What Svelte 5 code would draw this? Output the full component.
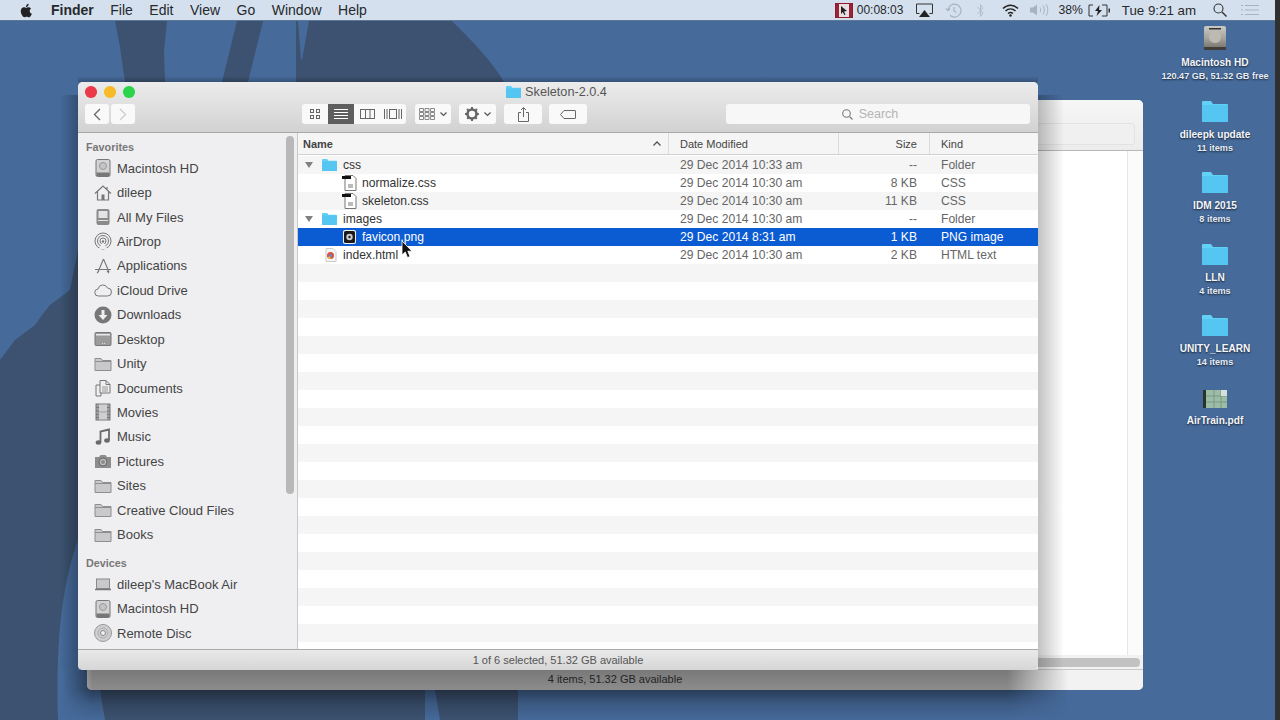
<script>
  const menus = ['File', 'Edit', 'View', 'Go', 'Window', 'Help'];

  const favorites = [
    ['hd', 'Macintosh HD'], ['home', 'dileep'], ['files', 'All My Files'], ['airdrop', 'AirDrop'],
    ['apps', 'Applications'], ['cloud', 'iCloud Drive'], ['downloads', 'Downloads'], ['desktop', 'Desktop'],
    ['folder', 'Unity'], ['docs', 'Documents'], ['movies', 'Movies'], ['music', 'Music'],
    ['camera', 'Pictures'], ['folder', 'Sites'], ['folder', 'Creative Cloud Files'], ['folder', 'Books']
  ];
  const devices = [['laptop', "dileep's MacBook Air"], ['hd', 'Macintosh HD'], ['disc', 'Remote Disc']];

  const files = [
    { name: 'css', type: 'folder', open: true, date: '29 Dec 2014 10:33 am', size: '--', kind: 'Folder' },
    { name: 'normalize.css', type: 'css', child: true, date: '29 Dec 2014 10:30 am', size: '8 KB', kind: 'CSS' },
    { name: 'skeleton.css', type: 'css', child: true, date: '29 Dec 2014 10:30 am', size: '11 KB', kind: 'CSS' },
    { name: 'images', type: 'folder', open: true, date: '29 Dec 2014 10:30 am', size: '--', kind: 'Folder' },
    { name: 'favicon.png', type: 'png', child: true, selected: true, date: '29 Dec 2014 8:31 am', size: '1 KB', kind: 'PNG image' },
    { name: 'index.html', type: 'html', date: '29 Dec 2014 10:30 am', size: '2 KB', kind: 'HTML text' }
  ];
  const emptyRows = Array(21).fill(0);

  const desktopItems = [
    { icon: 'hd', name: 'Macintosh HD', info: '120.47 GB, 51.32 GB free' },
    { icon: 'folder', name: 'dileepk update', info: '11 items' },
    { icon: 'folder', name: 'IDM 2015', info: '8 items' },
    { icon: 'folder', name: 'LLN', info: '4 items' },
    { icon: 'folder', name: 'UNITY_LEARN', info: '14 items' },
    { icon: 'pdf', name: 'AirTrain.pdf', info: '' }
  ];
</script>

{#snippet folderIcon(w, h)}
  <svg width={w} height={h} viewBox="0 0 26 21">
    <path d="M1 0h8l2 3h14a1 1 0 0 1 1 1v16a1 1 0 0 1-1 1H1a1 1 0 0 1-1-1V1a1 1 0 0 1 1-1z" fill="#63d0f6" />
    <rect x="0" y="4" width="26" height="17" rx="1" fill="#55c6f2" />
  </svg>
{/snippet}

{#snippet sideIcon(name)}
  <svg class="side-icon" width="18" height="18" viewBox="0 0 18 18" fill="none" stroke="#777" stroke-width="1">
    {#if name === 'hd'}
      <rect x="2" y="0.5" width="14" height="17" rx="1.5" fill="#d2d2d4" />
      <circle cx="9" cy="7" r="3.5" fill="#c4c4c6" stroke="#999" />
      <rect x="2.5" y="13.5" width="13" height="3.5" fill="#777" stroke="none" />
    {:else if name === 'home'}
      <path d="M1 9.5 9 2l8 7.5M3.5 7.5V16h11V7.5M13 3v2.5" stroke-width="1.2" />
      <rect x="7.5" y="10.5" width="3" height="5.5" fill="#777" stroke="none" />
    {:else if name === 'files'}
      <rect x="2.5" y="1" width="13" height="16" rx="2" fill="#8a8a8a" stroke="none" />
      <rect x="4.5" y="3" width="9" height="7" fill="#e4e4e6" stroke="none" />
      <path d="M4 12.5h10" stroke="#e4e4e6" />
    {:else if name === 'airdrop'}
      <circle cx="9" cy="9" r="8" />
      <circle cx="9" cy="9" r="5.5" />
      <circle cx="9" cy="9" r="3" />
      <path d="M5 17 9 9l4 8z" fill="#efeff1" stroke="none" />
      <circle cx="9" cy="9.5" r="1.2" fill="#777" stroke="none" />
    {:else if name === 'apps'}
      <path d="M9.5 2 4 15M9.5 2 15 15M1 12.5h16M3 16l2-2M15 16l-2-2" stroke-width="1.1" />
    {:else if name === 'cloud'}
      <path d="M4.5 15a3.5 3.5 0 0 1-.5-7 5 5 0 0 1 9.5-1 4 4 0 0 1 0 8z" />
    {:else if name === 'downloads'}
      <circle cx="9" cy="9" r="8.5" fill="#777" stroke="none" />
      <path d="M7.5 4h3v5h3L9 14 4.5 9h3z" fill="#efeff1" stroke="none" />
    {:else if name === 'desktop'}
      <rect x="1" y="2.5" width="16" height="13" rx="1" fill="#9b9b9b" />
      <rect x="2" y="4" width="14" height="1.5" fill="#e8e8e8" stroke="none" />
      <path d="M8 13.5h3" stroke="#ddd" stroke-dasharray="1 1" />
    {:else if name === 'folder'}
      <path d="M1 3.5h6l1.5 2H17v10H1z" fill="#c9c9cb" stroke="#8e8e8e" />
      <path d="M1 6.5h16" stroke="#8e8e8e" />
    {:else if name === 'docs'}
      <path d="M2 6h5v11H2z" fill="#efeff1" />
      <path d="M6 1.500h6l4 4V14H6z" fill="#efeff1" />
      <path d="M12 1.500v4h4" />
      <path d="M8 8h6M8 10h6M8 12h6" stroke="#999" />
    {:else if name === 'movies'}
      <rect x="2" y="1" width="14" height="16" fill="#a0a0a0" />
      <rect x="5" y="1.5" width="8" height="7" fill="#cfcfd1" stroke="none" />
      <rect x="5" y="9.5" width="8" height="7" fill="#cfcfd1" stroke="none" />
      <path d="M2 4.5h3M2 8h3M2 11.5h3M2 14.5h3M13 4.5h3M13 8h3M13 11.5h3M13 14.500h3" />
    {:else if name === 'music'}
      <path d="M6.5 14V3.500L15 1.500V12" stroke="#6a6a6a" stroke-width="1.8" />
      <ellipse cx="4.5" cy="14.5" rx="2.8" ry="2.2" fill="#6a6a6a" stroke="none" />
      <ellipse cx="13" cy="12.5" rx="2.8" ry="2.2" fill="#6a6a6a" stroke="none" />
    {:else if name === 'camera'}
      <path d="M1 5h4l1.500-2h5L13 5h4v11H1z" fill="#8c8c8c" stroke="none" />
      <circle cx="9" cy="10" r="4" fill="#bcbcbc" stroke="#666" />
      <circle cx="9" cy="10" r="2" fill="#8c8c8c" stroke="none" />
    {:else if name === 'laptop'}
      <rect x="2.5" y="4" width="13" height="9.5" fill="#c9c9cb" stroke="#8a8a8a" />
      <path d="M1 14.5h16" stroke="#777" stroke-width="1.5" />
    {:else if name === 'disc'}
      <circle cx="9" cy="9" r="8.5" fill="#cfcfd1" stroke="#999" />
      <circle cx="9" cy="9" r="5" stroke="#aaa" />
      <circle cx="9" cy="9" r="2.5" fill="#efeff1" stroke="#888" />
    {/if}
  </svg>
{/snippet}

{#snippet fileIcon(type)}
  {#if type === 'folder'}
    <span class="file-icon">{@render folderIcon(15, 12)}</span>
  {:else if type === 'css'}
    <svg class="file-icon" width="15" height="16" viewBox="0 0 15 16">
      <path d="M3 .5h8l3 3v12H3z" fill="#fff" stroke="#777" />
      <rect x="0" y="1" width="9" height="3" fill="#111" />
      <rect x="6" y="9" width="5" height="4" fill="#bbb" />
    </svg>
  {:else if type === 'png'}
    <svg class="file-icon" width="15" height="14" viewBox="0 0 15 14">
      <rect x="1" y="0" width="13" height="14" rx="2" fill="#f2f2f2" />
      <rect x="2" y="1" width="11" height="12" rx="1.5" fill="#1a1a1a" />
      <circle cx="7.5" cy="7" r="3.2" fill="#ccc" />
      <circle cx="7.5" cy="7" r="1.2" fill="#222" />
    </svg>
  {:else}
    <svg class="file-icon" width="13" height="14" viewBox="0 0 13 14">
      <path d="M2 .5h7l3 3v10H2z" fill="#f6f6f6" stroke="#ccc" />
      <circle cx="6.5" cy="7.5" r="3.5" fill="#d9523f" />
      <path d="M6.500 7.500 3.500 9.500a3.500 3.500 0 0 0 3 1.500z" fill="#e8c33c" />
      <circle cx="6.5" cy="7.5" r="1.5" fill="#5a8fd8" />
    </svg>
  {/if}
{/snippet}

<div class="screen">
  <div class="desktop">
    <svg class="wallpaper" width="1275" height="720" viewBox="0 0 1275 720">
      <g fill="#3c5270">
        <path d="M115 21h52l-3 30 1 31h-40l-5-35z" />
        <path d="M237 21h26l-15 61h-26z" />
        <path d="M309 21H452c20 20 40 40 52 61v40H296V21h2l3 39h1z" />
        <path d="M0 360l15-20 20-15 7-10 8-10 20-15 8-40h440v470H0z" />
      </g>
      <path d="M58 720c-2-70 2-130 20-180l12 5 10 145 5 30z" fill="#466a9a" />
      <path d="M425 690h10l5 30h-15z" fill="#466a9a" />
    </svg>

    <header class="menubar">
      <svg class="apple" width="13" height="15" viewBox="0 0 14 16">
        <path d="M11.500 8.500c0-1.800 1.400-2.600 1.500-2.700-.8-1.200-2.100-1.400-2.500-1.400-1.100-.1-2.100.6-2.700.6-.5 0-1.400-.6-2.300-.6C4.300 4.400 3.200 5.100 2.500 6.200 1.200 8.400 2.200 11.700 3.500 13.500c.6.900 1.400 1.900 2.300 1.900.9 0 1.300-.6 2.400-.6s1.400.6 2.400.6 1.600-.9 2.200-1.800c.7-1 1-2 1-2.100-.1 0-2.300-.9-2.300-3zM9.700 3.100c.5-.6.800-1.400.7-2.300-.7 0-1.600.5-2.100 1.100-.5.500-.9 1.400-.8 2.200.8.100 1.700-.4 2.200-1z" fill="#222" />
      </svg>
      <b class="app-name">Finder</b>
      {#each menus as m}<span class="menu">{m}</span>{/each}

      <div class="status">
        <svg class="rec" width="18" height="15" viewBox="0 0 18 15">
          <rect x="0.5" y="0.5" width="17" height="14" fill="#e8dfe4" stroke="#8e1c2e" />
          <path d="M1 1h3v13H1zM14 1h3v13h-3z" fill="#9c2236" />
          <path d="M6 3l6 5-3 .4 1.500 3-1.200.6L7.800 9 6 11z" fill="#222" />
        </svg>
        <span class="timer">00:08:03</span>
        <svg class="airplay" width="17" height="15" viewBox="0 0 17 15">
          <path d="M3.500 10.500H.5V1h16v9.500h-3" fill="none" stroke="#333" />
          <path d="M8.500 7 14 14H3z" fill="#222" />
        </svg>
        <svg class="timemachine" width="17" height="15" viewBox="0 0 17 15" fill="none" stroke="#a9b3c0" stroke-width="1.200">
          <path d="M3 7.500a6.500 6.500 0 1 1 2 4.800M1 5.500l2 2.200 2-2.200M9 4v4l2.500 1.500" />
        </svg>
        <svg class="bluetooth" width="7" height="15" viewBox="0 0 7 15" fill="none" stroke="#b3bdca">
          <path d="M.5 4 6 10 3.500 13.500v-12L6 5 .5 11" />
        </svg>
        <svg class="wifi" width="17" height="13" viewBox="0 0 17 13" fill="none" stroke="#222" stroke-width="1.500">
          <path d="M1 4.500c4.500-4.400 10.500-4.400 15 0M3.500 7c3-2.800 7-2.800 10 0M6 9.500c1.500-1.200 3.500-1.200 5 0" />
          <circle cx="8.500" cy="11.500" r="1.200" fill="#222" stroke="none" />
        </svg>
        <svg class="volume" width="20" height="14" viewBox="0 0 20 14" fill="none" stroke="#a9b3c0">
          <path d="M1 4.500h3L8 1.500v11l-4-3H1z" fill="#a9b3c0" stroke="none" />
          <path d="M11 4.500c1 1.500 1 3.500 0 5M14 2.500c1.800 2.800 1.800 6.200 0 9M17 1c2.300 3.700 2.300 8.300 0 12" />
        </svg>
        <span class="percent">38%</span>
        <svg class="battery" width="22" height="13" viewBox="0 0 22 13" fill="none" stroke="#333">
          <path d="M5 1H1v11h4M14 1h5v11h-5" />
          <path d="M11.500 1 7 7h3l-1.500 5L14 6h-3z" fill="#222" stroke="none" />
          <rect x="20.500" y="4.500" width="1.500" height="4" fill="#333" stroke="none" />
        </svg>
        <span class="clock">Tue 9:21 am</span>
        <svg class="spot" width="14" height="14" viewBox="0 0 14 14" fill="none" stroke="#333" stroke-width="1.100">
          <circle cx="5.500" cy="5.500" r="4.500" />
          <path d="m9 9 4.500 4.500" stroke-width="1.400" />
        </svg>
        <svg class="notif" width="18" height="12" viewBox="0 0 18 12" fill="none" stroke="#a9b3c0" stroke-width="1.200">
          <path d="M0 1.500h2M4 1.500h14M0 6h2M4 6h14M0 10.500h2M4 10.500h14" />
        </svg>
      </div>
    </header>

    <ul class="desktop-icons">
      {#each desktopItems as item}
        <li class="desktop-item">
          <div class="desktop-thumb">
            {#if item.icon === 'folder'}
              {@render folderIcon(26, 21)}
            {:else if item.icon === 'hd'}
              <svg width="24" height="24" viewBox="0 0 24 24">
                <defs>
                  <linearGradient id="hd" x1="0" y1="0" x2="0" y2="1">
                    <stop offset="0" stop-color="#c9c9c4" />
                    <stop offset=".5" stop-color="#a7a49c" />
                    <stop offset="1" stop-color="#6e6c66" />
                  </linearGradient>
                </defs>
                <rect x="1" y="0" width="22" height="24" rx="2" fill="url(#hd)" />
                <rect x="6" y="2" width="12" height="1.5" fill="#333" />
                <circle cx="12" cy="11" r="6" fill="#bdbab2" />
                <rect x="1" y="21" width="22" height="3" fill="#3f3e3b" />
              </svg>
            {:else}
              <svg width="24" height="18" viewBox="0 0 24 18">
                <rect width="24" height="18" fill="#9dbca6" />
                <rect width="3" height="18" fill="#28332c" />
                <path d="M3 6h21M3 12h21M11 0v18M18 0v18" stroke="#7b9886" />
                <rect x="18" y="0" width="6" height="6" fill="#d5e0da" />
              </svg>
            {/if}
          </div>
          <span class="desktop-name">{item.name}</span>
          {#if item.info}<span class="desktop-info">{item.info}</span>{/if}
        </li>
      {/each}
    </ul>

    <section class="window back">
      <div class="back-head"><div class="back-search"></div></div>
      <div class="back-body"><div class="back-gutter"></div></div>
      <div class="back-scroll"><div class="back-thumb"></div></div>
      <div class="back-status">4 items, 51.32 GB available</div>
    </section>

    <!-- drop shadow of the front window -->
    <div class="shade shade-bottom"></div>
    <div class="shade shade-right"></div>
    <div class="shade shade-left"></div>
    <div class="shade shade-top"></div>

    <section class="window front">
      <div class="chrome">
        <div class="titlebar">
          <div class="lights">
            <i class="light red"></i><i class="light yellow"></i><i class="light green"></i>
          </div>
          <div class="title">{@render folderIcon(15, 14)}<span>Skeleton-2.0.4</span></div>
        </div>
        <div class="toolbar">
          <div class="nav">
            <button class="tb-btn nav-btn" aria-label="Back">
              <svg width="8" height="13" viewBox="0 0 8 13" fill="none" stroke="#666" stroke-width="1.300"><path d="M7 1 1.500 6.500 7 12" /></svg>
            </button>
            <button class="tb-btn nav-btn" aria-label="Forward">
              <svg width="8" height="13" viewBox="0 0 8 13" fill="none" stroke="#ccc" stroke-width="1.300"><path d="M1 1l5.500 5.500L1 12" /></svg>
            </button>
          </div>
          <div class="views">
            <button class="view" aria-label="Icons">
              <svg width="10" height="10" viewBox="0 0 10 10" fill="none" stroke="#666"><rect x=".5" y=".5" width="3" height="3" /><rect x="6.5" y=".5" width="3" height="3" /><rect x=".5" y="6.5" width="3" height="3" /><rect x="6.5" y="6.5" width="3" height="3" /></svg>
            </button>
            <button class="view on" aria-label="List">
              <svg width="14" height="10" viewBox="0 0 14 10" stroke="#fff"><path d="M0 .5h14M0 3.500h14M0 6.500h14M0 9.500h14" /></svg>
            </button>
            <button class="view" aria-label="Columns">
              <svg width="15" height="10" viewBox="0 0 15 10" fill="none" stroke="#666"><rect x=".5" y=".5" width="14" height="9" /><path d="M5.500 0v10M10 0v10" /></svg>
            </button>
            <button class="view" aria-label="Cover Flow">
              <svg width="18" height="10" viewBox="0 0 18 10" fill="none" stroke="#666"><rect x="5.5" y=".5" width="7" height="9" /><path d="M.5 0v10M3 0v10M15 0v10M17.500 0v10" /></svg>
            </button>
          </div>
          <button class="tb-btn arrange" aria-label="Arrange">
            <svg width="16" height="12" viewBox="0 0 16 12" fill="none" stroke="#888"><path d="M.5.5h4v3h-4zM6 .5h4v3H6zM11.500.5h4v3h-4zM.5 4.500h4v3h-4zM6 4.500h4v3H6zM11.500 4.500h4v3h-4zM.5 8.500h4v3h-4zM6 8.500h4v3H6zM11.500 8.500h4v3h-4z" /></svg>
            <svg width="7" height="5" viewBox="0 0 7 5" fill="none" stroke="#555" stroke-width="1.200"><path d="m.5.500 3 3 3-3" /></svg>
          </button>
          <button class="tb-btn gear" aria-label="Action">
            <svg width="14" height="14" viewBox="0 0 14 14"><circle cx="7" cy="7" r="4.500" fill="none" stroke="#666" stroke-width="2.600" /><path d="M7 0v14M0 7h14M2 2l10 10M12 2 2 12" stroke="#666" stroke-width="2" stroke-dasharray="2.300 9.300" /></svg>
            <svg width="7" height="5" viewBox="0 0 7 5" fill="none" stroke="#555" stroke-width="1.200"><path d="m.5.500 3 3 3-3" /></svg>
          </button>
          <button class="tb-btn share" aria-label="Share">
            <svg width="11" height="15" viewBox="0 0 11 15" fill="none" stroke="#666"><path d="M3 5.500H.5v9h10v-9H8M5.500 10V.5M3 3l2.500-2.500L8 3" /></svg>
          </button>
          <button class="tb-btn tag" aria-label="Tag">
            <svg width="16" height="9" viewBox="0 0 16 9" fill="none" stroke="#666"><path d="M4 .5h11a.5.500 0 0 1 .5.500v7a.5.500 0 0 1-.5.500H4L.5 4.500z" /></svg>
          </button>
          <div class="search">
            <svg width="11" height="11" viewBox="0 0 11 11" fill="none" stroke="#777" stroke-width="1.100"><circle cx="4.500" cy="4.500" r="3.800" /><path d="m7.500 7.500 3 3" /></svg>
            <span>Search</span>
          </div>
        </div>
      </div>

      <div class="main">
        <aside class="sidebar">
          <h4 class="side-head first">Favorites</h4>
          {#each favorites as [icon, label]}
            <div class="side-row">{@render sideIcon(icon)}<span>{label}</span></div>
          {/each}
          <h4 class="side-head">Devices</h4>
          {#each devices as [icon, label]}
            <div class="side-row">{@render sideIcon(icon)}<span>{label}</span></div>
          {/each}
          <div class="side-thumb"></div>
        </aside>

        <div class="list">
          <div class="row col-head">
            <div class="cell name-head">Name<svg width="8" height="5" viewBox="0 0 8 5" fill="none" stroke="#555" stroke-width="1.300"><path d="m.5 4.500 3.500-3.500 3.500 3.500" /></svg></div>
            <div class="cell date">Date Modified</div>
            <div class="cell size">Size</div>
            <div class="cell kind">Kind</div>
          </div>
          <div class="rows">
            {#each files as f}
              <div class="row file" class:selected={f.selected}>
                <div class="cell name" class:child={f.child} class:flat={!f.child && !f.open}>
                  {#if f.open}<i class="disclosure"></i>{/if}
                  {@render fileIcon(f.type)}
                  <span>{f.name}</span>
                </div>
                <div class="cell date">{f.date}</div>
                <div class="cell size">{f.size}</div>
                <div class="cell kind">{f.kind}</div>
              </div>
            {/each}
            {#each emptyRows as _}
              <div class="row file"></div>
            {/each}
          </div>
        </div>
      </div>

      <footer class="statusbar">1 of 6 selected, 51.32 GB available</footer>

      <svg class="cursor" width="12" height="19" viewBox="0 0 12 19">
        <path d="M1 1v14l3.300-3 2.200 5.500 2.500-1-2.200-5.300H11z" fill="#111" stroke="#fff" stroke-width=".8" />
      </svg>
    </section>
  </div>
</div>

<style>
  :global(body) {
    margin: 0;
    background: #2f2f2f;
  }

  .screen {
    width: 1280px;
    height: 720px;
    overflow: hidden;
    background: #303030;
    font-family: "Liberation Sans", Arial, sans-serif;
  }

  .desktop {
    position: relative;
    width: 1275px;
    height: 720px;
    background: #466a9a;
  }

  .wallpaper {
    position: absolute;
    inset: 0;
  }

  /* menu bar */
  .menubar {
    position: relative;
    display: flex;
    align-items: center;
    height: 20px;
    padding-left: 19px;
    background: #d5e0ee;
    border-bottom: 1px solid #5d7897;
    color: #26282c;
    font-size: 14px;
  }

  .app-name {
    margin-left: 19px;
    margin-right: 16.5px;
  }

  .menu {
    margin-right: 16.5px;
  }

  .status {
    display: flex;
    align-items: center;
    margin-left: auto;
    padding-right: 16px;
    font-size: 12px;
  }

  .timer { margin-left: 4px; }
  .airplay { margin-left: 13px; }
  .timemachine { margin-left: 12px; }
  .bluetooth { margin-left: 15px; }
  .wifi { margin-left: 18px; }
  .volume { margin-left: 10px; }
  .percent { margin-left: 9px; font-size: 12.2px; }
  .battery { margin-left: 5px; }
  .clock { margin-left: 12px; font-size: 13.3px; }
  .spot { margin-left: 17px; }
  .notif { margin-left: 14px; }

  /* desktop icons */
  .desktop-icons {
    position: absolute;
    left: 1155px;
    top: 26px;
    width: 120px;
    margin: 0;
    padding: 0;
    list-style: none;
  }

  .desktop-item {
    display: flex;
    flex-direction: column;
    align-items: center;
    height: 71.6px;
    color: #f4f6fa;
    font-weight: bold;
    text-shadow: 0 1px 2px rgba(0, 0, 0, 0.7);
  }

  .desktop-thumb {
    display: flex;
    align-items: flex-end;
    justify-content: center;
    height: 24px;
    margin-bottom: 6px;
  }

  .desktop-name {
    font-size: 10.1px;
    line-height: 13px;
    white-space: nowrap;
  }

  .desktop-info {
    font-size: 9.1px;
    line-height: 14px;
    white-space: nowrap;
    color: #e6edf5;
  }

  /* windows */
  .window {
    position: absolute;
    display: flex;
    flex-direction: column;
    border-radius: 5px;
  }

  .back {
    left: 87px;
    top: 100px;
    width: 1056px;
    height: 590px;
    background: #fff;
    overflow: hidden;
  }

  .back-head {
    display: flex;
    justify-content: flex-end;
    height: 51px;
    padding: 23px 8px 0 0;
    box-sizing: border-box;
    background: linear-gradient(#f6f6f6, #ececec);
    border-bottom: 1px solid #b8b8b8;
  }

  .back-search {
    width: 300px;
    height: 20px;
    background: #f0f0f0;
    border: 1px solid #e2e2e2;
    border-radius: 3px;
  }

  .back-body {
    flex: 1;
    display: flex;
    justify-content: flex-end;
  }

  .back-gutter {
    width: 15px;
    border-left: 1px solid #e6e6e6;
    background: #fbfbfb;
  }

  .back-scroll {
    height: 15px;
    padding: 3px 3px 0 0;
    box-sizing: border-box;
    background: #f2f2f2;
    border-bottom: 1px solid #c8c8c8;
  }

  .back-thumb {
    height: 9px;
    background: #c2c2c2;
    border-radius: 4px;
  }

  .back-status {
    height: 20px;
    line-height: 18px;
    text-align: center;
    font-size: 11px;
    color: #444;
    background: #f2f2f2;
  }

  .shade {
    position: absolute;
  }

  .shade-bottom {
    left: 62px;
    top: 670px;
    width: 1006px;
    height: 50px;
    background: linear-gradient(rgba(0, 0, 0, 0.5), rgba(0, 0, 0, 0.42) 40%, rgba(0, 0, 0, 0.14) 70%, rgba(0, 0, 0, 0));
    -webkit-mask-image: linear-gradient(to right, transparent, #000 3%, #000 94%, transparent);
    mask-image: linear-gradient(to right, transparent, #000 3%, #000 94%, transparent);
  }

  .shade-right {
    left: 1038px;
    top: 95px;
    width: 26px;
    height: 575px;
    background: linear-gradient(to right, rgba(0, 0, 0, 0.24), rgba(0, 0, 0, 0));
  }

  .shade-left {
    left: 60px;
    top: 95px;
    width: 18px;
    height: 575px;
    background: linear-gradient(to left, rgba(0, 0, 0, 0.26), rgba(0, 0, 0, 0));
  }

  .shade-top {
    left: 78px;
    top: 76px;
    width: 960px;
    height: 6px;
    background: linear-gradient(to top, rgba(0, 0, 0, 0.22), rgba(0, 0, 0, 0));
  }

  .front {
    left: 78px;
    top: 82px;
    width: 960px;
    height: 588px;
    background: #fff;
  }

  .chrome {
    height: 51px;
    box-sizing: border-box;
    background: linear-gradient(#ececec, #d2d2d2);
    border-bottom: 1px solid #a9a9a9;
    border-radius: 5px 5px 0 0;
  }

  .titlebar {
    display: grid;
    grid-template-columns: 1fr auto 1fr;
    align-items: center;
    height: 20px;
    padding: 0 7px;
  }

  .lights {
    display: flex;
    gap: 7.5px;
  }

  .light {
    width: 11.5px;
    height: 11.5px;
    border-radius: 50%;
  }

  .red { background: #ea3a4a; }
  .yellow { background: #f8bb27; }
  .green { background: #2bd44a; }

  .title {
    display: flex;
    align-items: center;
    gap: 4px;
    font-size: 12.7px;
    color: #555;
    margin-right: 3px;
  }

  .toolbar {
    display: flex;
    align-items: flex-start;
    height: 22px;
    padding: 2px 0 0 7px;
    box-sizing: border-box;
  }

  button {
    padding: 0;
    border: none;
    font: inherit;
  }

  .tb-btn {
    display: flex;
    align-items: center;
    justify-content: center;
    gap: 5px;
    height: 20px;
    background: #f9f9f9;
    border-radius: 3px;
  }

  .nav {
    display: flex;
    gap: 2px;
  }

  .nav-btn {
    width: 24px;
  }

  .views {
    display: flex;
    height: 20px;
    margin-left: 167px;
    background: #f9f9f9;
    border-radius: 3px;
    overflow: hidden;
  }

  .view {
    display: flex;
    align-items: center;
    justify-content: center;
    width: 26px;
    background: none;
  }

  .view.on {
    background: #5e5e5e;
  }

  .arrange {
    width: 36px;
    margin-left: 9px;
  }

  .gear {
    width: 37px;
    margin-left: 8px;
  }

  .share {
    width: 38px;
    margin-left: 8px;
  }

  .tag {
    width: 38px;
    margin-left: 7px;
  }

  .search {
    display: flex;
    align-items: center;
    justify-content: center;
    gap: 6px;
    width: 304px;
    height: 20px;
    margin-left: 139px;
    padding-right: 16px;
    box-sizing: border-box;
    background: #f7f7f7;
    border-radius: 3px;
    color: #b4b4b4;
    font-size: 12.5px;
  }

  .main {
    flex: 1;
    display: flex;
    min-height: 0;
  }

  /* sidebar */
  .sidebar {
    position: relative;
    width: 219px;
    flex: none;
    background: #efeff1;
    border-right: 1px solid #c8c8c8;
    overflow: hidden;
  }

  .side-head {
    display: flex;
    align-items: flex-end;
    height: 25.5px;
    margin: 0;
    padding: 0 0 3.5px 8px;
    box-sizing: border-box;
    font-size: 10.8px;
    font-weight: bold;
    color: #777;
  }

  .side-head.first {
    height: 23px;
    padding-bottom: 3.5px;
  }

  .side-row {
    display: flex;
    align-items: center;
    gap: 5px;
    height: 24.43px;
    padding-left: 16px;
    font-size: 13px;
    color: #444;
  }

  .side-icon {
    flex: none;
  }

  .side-thumb {
    position: absolute;
    left: 208px;
    top: 3px;
    width: 8px;
    height: 358px;
    background: #b8b8b8;
    border-radius: 4px;
  }

  /* file list */
  .list {
    flex: 1;
    min-width: 0;
    display: flex;
    flex-direction: column;
    overflow: hidden;
  }

  .row {
    display: grid;
    grid-template-columns: 371px 170px 91px 1fr;
    align-items: center;
  }

  .col-head {
    height: 21px;
    flex: none;
    background: #f5f5f5;
    border-bottom: 1px solid #d0d0d0;
    font-size: 11px;
    color: #444;
  }

  .col-head .cell {
    height: 100%;
    display: flex;
    align-items: center;
    border-right: 1px solid #dcdcdc;
    box-sizing: border-box;
  }

  .col-head .size {
    justify-content: flex-end;
    padding-right: 12px;
  }

  .col-head .kind {
    border-right: none;
  }

  .col-head .name-head {
    justify-content: space-between;
    font-weight: bold;
    padding: 0 7px 0 5px;
  }

  .rows {
    flex: 1;
    min-height: 0;
    overflow: hidden;
    padding-top: 1px;
  }

  .file {
    height: 18px;
    font-size: 12.1px;
    color: #333;
  }

  .file:nth-child(odd) {
    background: #f5f5f5;
  }

  .file .date,
  .file .size,
  .file .kind {
    color: #666;
  }

  .file.selected {
    background: #0b5bd3;
  }

  .file.selected .cell {
    color: #fff;
  }

  .cell {
    white-space: nowrap;
  }

  .date { padding-left: 11px; }
  .size { padding-right: 13px; text-align: right; }
  .kind { padding-left: 11px; }

  .name {
    display: flex;
    align-items: center;
    padding-left: 7px;
  }

  .name.child {
    padding-left: 44px;
  }

  .name.flat {
    padding-left: 26px;
  }

  .disclosure {
    width: 0;
    height: 0;
    margin: 0 9px 0 0;
    border-style: solid;
    border-width: 6px 4.5px 0;
    border-color: #808080 transparent transparent;
  }

  .file-icon {
    display: inline-flex;
    flex: none;
    margin-right: 5px;
  }

  .disclosure + .file-icon {
    margin-right: 6px;
  }

  .name.flat .file-icon {
    margin-right: 6px;
  }

  .statusbar {
    flex: none;
    height: 21px;
    line-height: 20px;
    text-align: center;
    font-size: 11px;
    color: #555;
    background: linear-gradient(#e9e9e9, #d6d6d6);
    border-top: 1px solid #aaa;
    box-sizing: border-box;
    border-radius: 0 0 5px 5px;
  }

  .cursor {
    position: absolute;
    left: 323px;
    top: 158px;
  }
</style>
